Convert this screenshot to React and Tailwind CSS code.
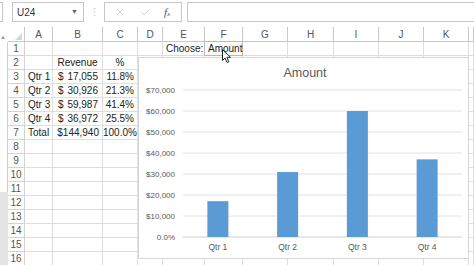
import { X, Check } from "lucide-react";

const cols = ["A", "B", "C", "D", "E", "F", "G", "H", "I", "J", "K", ""];

// cell contents keyed by row number -> column letter
const cells = {
  1: { E: { t: "Choose:" }, F: { t: "Amount", box: true } },
  2: { B: { t: "Revenue", c: true }, C: { t: "%", c: true } },
  3: { A: { t: "Qtr 1" }, B: { acc: "17,055" }, C: { t: "11.8%", r: true } },
  4: { A: { t: "Qtr 2" }, B: { acc: "30,926" }, C: { t: "21.3%", r: true } },
  5: { A: { t: "Qtr 3" }, B: { acc: "59,987" }, C: { t: "41.4%", r: true } },
  6: { A: { t: "Qtr 4" }, B: { acc: "36,972" }, C: { t: "25.5%", r: true } },
  7: { A: { t: "Total" }, B: { t: "$144,940", r: true }, C: { t: "100.0%", r: true } },
};

const data = [
  { q: "Qtr 1", v: 17055 },
  { q: "Qtr 2", v: 30926 },
  { q: "Qtr 3", v: 59987 },
  { q: "Qtr 4", v: 36972 },
];

function Cell({ v }) {
  if (!v) return null;
  if (v.acc)
    return (
      <div className="flex justify-between w-full pl-[5px] pr-[4px]">
        <span>$</span>
        <span>{v.acc}</span>
      </div>
    );
  if (v.box)
    return (
      <div className="absolute inset-[-1px] border border-[#b9b9b9] pl-[3px] flex items-center">
        {v.t}
      </div>
    );
  return (
    <div
      className={
        "w-full " + (v.c ? "text-center" : v.r ? "text-right pr-[3px]" : "pl-[3px]")
      }
    >
      {v.t}
    </div>
  );
}

function Chart() {
  const x0 = 183, x1 = 462, y0 = 237;
  const ys = [0, 10000, 20000, 30000, 40000, 50000, 60000, 70000];
  const yOf = (v) => y0 - (v / 1000) * 2.1;
  const slot = (x1 - x0) / 4;
  return (
    <div className="absolute left-[138px] top-[57px] w-[331px] h-[202px] bg-white border border-[#d6d6d6]">
      <svg width="331" height="202" viewBox="138 57 331 202" className="block -m-px">
        <text x="305" y="76.5" textAnchor="middle" fontSize="12.5" fill="#595959" fontFamily="Liberation Sans, Arial, sans-serif">
          Amount
        </text>
        {ys.map((v) => (
          <g key={v}>
            <line x1={x0} x2={x1} y1={yOf(v)} y2={yOf(v)} stroke={v === 0 ? "#cfcfcf" : "#e2e2e2"} strokeWidth="1" />
            <text x="175" y={yOf(v) + 3} textAnchor="end" fontSize="8" fill="#595959" fontFamily="Liberation Sans, Arial, sans-serif">
              {v === 0 ? "0.0%" : "$" + v.toLocaleString("en-US")}
            </text>
          </g>
        ))}
        {data.map((d, i) => {
          const cx = x0 + slot * (i + 0.5);
          return (
            <g key={d.q}>
              <rect x={cx - 10.5} y={yOf(d.v)} width="21" height={y0 - yOf(d.v)} fill="#5b9bd5" />
              <text x={cx} y="250" textAnchor="middle" fontSize="8.5" fill="#595959" fontFamily="Liberation Sans, Arial, sans-serif">
                {d.q}
              </text>
            </g>
          );
        })}
      </svg>
    </div>
  );
}

export default function App() {
  const rows = Array.from({ length: 16 }, (_, i) => i + 1);
  return (
    <div className="relative w-[474px] h-[265px] overflow-hidden bg-white text-[10px] text-[#222] font-['Liberation_Sans',Arial,sans-serif]">
      {/* formula bar */}
      <div className="h-[27px] flex items-start pt-[2px] bg-white">
        <div className="w-[3px] h-[20px] border-y border-r border-[#c6c6c6]" />
        <div className="ml-[9px] w-[72px] h-[20px] border border-[#c6c6c6] flex items-center justify-between pl-[4px] pr-[5px]">
          <span className="text-[#333]">U24</span>
          <span className="text-[7px] text-[#666]">▼</span>
        </div>
        <div className="w-[20px] h-[20px] flex items-center justify-center text-[#bbb] text-[11px]">⋮</div>
        <div className="w-[78px] h-[20px] border border-[#c6c6c6] flex items-center">
          <X size={10} strokeWidth={1.5} className="ml-[10px] text-[#b5b5b5]" />
          <Check size={11} strokeWidth={1.5} className="ml-[15px] text-[#b5b5b5]" />
          <span className="ml-[13px] italic text-[#555] font-['Liberation_Serif',serif] text-[11px]">
            f<span className="text-[7px]">x</span>
          </span>
        </div>
        <div className="ml-[5px] flex-1 h-[20px] border-y border-l border-[#c6c6c6]" />
      </div>

      {/* sheet */}
      <div className="flex">
        <div className="w-[8px] flex flex-col">
          <div className="h-[15px] flex items-end text-[6px] text-[#999]">▲</div>
          <div className="h-[150px] border-r border-[#cfcfcf] bg-white" />
          <div className="flex-1 bg-[#e4e4e4]" />
        </div>
        <div className="flex-1 grid grid-cols-[17px_28px_50px_35px_25px_42px_38px_45px_46px_45px_45px_45px_1fr] grid-rows-[15px_repeat(16,14px)]">
          <div className="border-r border-b border-[#c8c8c8] flex items-end justify-end pr-[2px] pb-[1px]">
            <div className="w-0 h-0 border-l-[7px] border-l-transparent border-b-[7px] border-b-[#d8d8d8]" />
          </div>
          {cols.map((c, i) => (
            <div key={"h" + i} className="border-r border-b border-[#c8c8c8] flex items-center justify-center text-[#555]">
              {c}
            </div>
          ))}
          {rows.map((r) => [
            <div key={"r" + r} className="border-r border-b border-[#d4d4d4] flex items-center justify-center text-[#555]">
              {r}
            </div>,
            ...cols.map((c, i) => (
              <div key={r + "-" + i} className="relative border-r border-b border-[#dedede] flex items-center whitespace-nowrap">
                <Cell v={cells[r] && cells[r][c]} />
              </div>
            )),
          ])}
        </div>
      </div>

      <Chart />

      {/* mouse pointer */}
      <svg className="absolute left-[222px] top-[49px]" width="10" height="15" viewBox="0 0 10 15">
        <path d="M0.5 0.5 L0.5 11.5 L3 9 L5 13.5 L6.8 12.7 L4.9 8.3 L8.5 8.3 Z" fill="#fff" stroke="#222" strokeWidth="1" />
      </svg>
    </div>
  );
}
